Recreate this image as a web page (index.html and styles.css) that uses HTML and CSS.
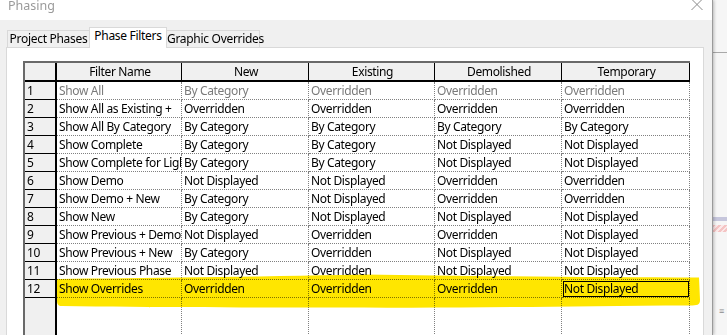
FILE: index.html
```html
<!DOCTYPE html>
<html lang="en">
<head>
    <meta charset="UTF-8">
    <title>Phasing</title>
    <link rel="stylesheet" href="styles.css">
</head>
<body>
    <div class="screen">
        <!-- Phasing dialog -->
        <div class="dialog">
            <div class="titlebar">
                <span class="title">Phasing</span>
                <svg class="close" width="14" height="12" viewBox="0 0 14 12">
                    <path d="M1.5 -1 L12.5 10 M12.5 -1 L1.5 10" stroke="#8a8a8a" stroke-width="1" fill="none"/>
                </svg>
            </div>

            <div class="tabs">
                <div class="tab tab-phases">Project Phases</div>
                <div class="tab tab-filters active">Phase Filters</div>
                <div class="tab tab-overrides">Graphic Overrides</div>
            </div>

            <div class="panel">
                <table class="grid">
                    <thead>
                        <tr>
                            <th class="corner"></th>
                            <th class="c-name">Filter Name</th>
                            <th class="c-new">New</th>
                            <th class="c-existing">Existing</th>
                            <th class="c-demolished">Demolished</th>
                            <th class="c-temporary">Temporary</th>
                        </tr>
                    </thead>
                    <tbody>
                        <tr class="locked">
                            <td class="num">1</td><td>Show All</td><td>By Category</td><td>Overridden</td><td>Overridden</td><td>Overridden</td>
                        </tr>
                        <tr>
                            <td class="num">2</td><td>Show All as Existing +</td><td>Overridden</td><td>Overridden</td><td>Overridden</td><td>Overridden</td>
                        </tr>
                        <tr>
                            <td class="num">3</td><td>Show All By Category</td><td>By Category</td><td>By Category</td><td>By Category</td><td>By Category</td>
                        </tr>
                        <tr>
                            <td class="num">4</td><td>Show Complete</td><td>By Category</td><td>By Category</td><td>Not Displayed</td><td>Not Displayed</td>
                        </tr>
                        <tr>
                            <td class="num">5</td><td>Show Complete for Lighting</td><td>By Category</td><td>By Category</td><td>Not Displayed</td><td>Not Displayed</td>
                        </tr>
                        <tr>
                            <td class="num">6</td><td>Show Demo</td><td>Not Displayed</td><td>Not Displayed</td><td>Overridden</td><td>Overridden</td>
                        </tr>
                        <tr>
                            <td class="num">7</td><td>Show Demo + New</td><td>By Category</td><td>Not Displayed</td><td>Overridden</td><td>Overridden</td>
                        </tr>
                        <tr>
                            <td class="num">8</td><td>Show New</td><td>By Category</td><td>Not Displayed</td><td>Not Displayed</td><td>Not Displayed</td>
                        </tr>
                        <tr>
                            <td class="num">9</td><td>Show Previous + Demo</td><td>Not Displayed</td><td>Overridden</td><td>Overridden</td><td>Not Displayed</td>
                        </tr>
                        <tr>
                            <td class="num">10</td><td>Show Previous + New</td><td>By Category</td><td>Overridden</td><td>Not Displayed</td><td>Not Displayed</td>
                        </tr>
                        <tr>
                            <td class="num">11</td><td>Show Previous Phase</td><td>Not Displayed</td><td>Overridden</td><td>Not Displayed</td><td>Not Displayed</td>
                        </tr>
                        <tr>
                            <td class="num">12</td><td>Show Overrides</td><td>Overridden</td><td>Overridden</td><td>Overridden</td><td class="focused">Not Displayed</td>
                        </tr>
                        <tr class="filler">
                            <td class="num"></td><td></td><td></td><td></td><td></td><td></td>
                        </tr>
                    </tbody>
                </table>
            </div>
        </div>

        <!-- window behind the dialog -->
        <div class="backdrop">
            <div class="bd-rule"></div>
            <div class="bd-band"></div>
            <div class="bd-hatch"></div>
            <div class="bd-mark">≡</div>
        </div>

        <!-- marker highlight drawn over row 12 -->
        <svg class="marker" width="727" height="335" viewBox="0 0 727 335">
            <path d="M57 279 C 140 278, 250 277, 364 274.5 C 470 276, 600 277.5, 699 277.5 L 700 300 C 700 305, 697 305.5, 690 305.5 C 560 306, 460 308.5, 364 307.5 C 250 307.5, 150 307.5, 62 306 C 58 306, 57 304, 57 300 Z" fill="#ffe600"/>
        </svg>
    </div>
</body>
</html>
```

FILE: styles.css
```css
body {
    margin: 0;
    font-family: "Noto Sans", "Open Sans", sans-serif;
    font-size: 12px;
    color: #000;
    overflow: hidden;
}

.screen {
    position: relative;
    display: flex;
    width: 727px;
    height: 335px;
    overflow: hidden;
}

.dialog {
    width: 712px;
    height: 335px;
    flex: none;
    background-color: #f0f0f0;
    border-right: 1px solid #9a9a9a;
    box-shadow: 1px 0 3px rgba(0, 0, 0, 0.25);
    z-index: 1;
}

.titlebar {
    height: 20px;
    background-color: #fff;
    display: flex;
    justify-content: space-between;
    align-items: flex-start;
}

.title {
    margin: -1px 0 0 8px;
    color: #9a9a9a;
    font-size: 12.5px;
    line-height: 14px;
}

.close {
    margin-right: 8px;
}

/* Tabs */
.tabs {
    display: flex;
    align-items: flex-end;
    height: 27px;
    padding-left: 7px;
}

.tab {
    box-sizing: border-box;
    height: 17px;
    border: 1px solid #d9d9d9;
    border-bottom: none;
    background-color: #f0f0f0;
    text-align: center;
    line-height: 15px;
    white-space: nowrap;
    letter-spacing: -0.3px;
}

.tab-phases {
    width: 83px;
}

.tab-filters {
    width: 78px;
    margin-left: -1px;
}

.tab-overrides {
    width: 94px;
    margin-left: -1px;
}

.tab.active {
    height: 21px;
    margin-bottom: -1px;
    background-color: #fff;
    line-height: 16px;
    position: relative;
    z-index: 2;
}

/* Tab panel */
.panel {
    margin-left: 6px;
    width: 698px;
    height: 300px;
    box-sizing: border-box;
    background-color: #fff;
    border: 1px solid #d9d9d9;
    padding: 13px 0 0 16px;
}

/* Grid */
.grid {
    border-collapse: separate;
    border-spacing: 0;
    table-layout: fixed;
    width: 667px;
    border-left: 2px solid #696969;
    border-top: 2px solid #696969;
    letter-spacing: -0.35px;
}

.grid th,
.grid td {
    box-sizing: border-box;
    padding: 0 0 0 2px;
    white-space: nowrap;
    overflow: hidden;
    text-overflow: clip;
    font-weight: normal;
}

.grid th {
    height: 19px;
    background-color: #f0f0f0;
    border-right: 1px solid #000;
    border-bottom: 2px solid #000;
    text-align: center;
    line-height: 16px;
}

.grid th.corner {
    width: 32px;
    border-right-width: 2px;
}

.c-name { width: 125px; }
.c-new { width: 127px; }
.c-existing { width: 126px; }
.c-demolished { width: 127px; }
.c-temporary { width: 128px; }

.grid td {
    height: 18px;
    border-right: 1px dotted #808080;
    border-bottom: 1px dotted #808080;
    line-height: 16px;
    text-align: left;
}

.grid td.num {
    background-color: #f0f0f0;
    border-right: 2px solid #000;
    border-bottom: 1px solid #000;
}

.grid tr.locked td {
    color: #7a7a7a;
}

.grid tr.locked td.num {
    color: #000;
}

.grid td.focused {
    outline: 1px solid #000;
    outline-offset: -2px;
}

.grid tr.filler td {
    height: 60px;
    border-bottom: none;
}

.grid tr.filler td.num {
    border-bottom: none;
}

/* Window behind */
.backdrop {
    flex: 1;
    background-color: #f6f6f6;
    position: relative;
}

.bd-rule {
    margin-top: 52px;
    border-top: 1px solid #a9a9a9;
    height: 140px;
}

.bd-band {
    height: 4px;
    margin-top: 24px;
    background-color: #c6c6dc;
}

.bd-hatch {
    height: 7px;
    margin-top: 4px;
    background: repeating-linear-gradient(135deg, #f4c4c4 0 2px, #fbe8e8 2px 4px);
}

.bd-mark {
    margin: 74px 0 0 6px;
    color: #8a8a8a;
    font-size: 9px;
    line-height: 10px;
}

/* Marker highlight */
.marker {
    position: absolute;
    top: 0;
    left: 0;
    pointer-events: none;
    mix-blend-mode: multiply;
    z-index: 5;
}
```
